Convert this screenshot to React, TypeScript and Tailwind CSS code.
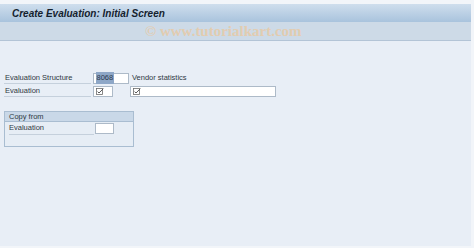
import React from 'react';

const font = { fontFamily: '"Liberation Sans", Arial, sans-serif' };

function CheckGlyph() {
  return (
    <svg width="8" height="7" viewBox="0 0 8 7" className="block">
      <rect x="0.5" y="0.5" width="6" height="6" fill="none" stroke="#6b6b6b" strokeWidth="0.8" />
      <path d="M1.6 3.6 L3 5 L7.4 0.6" fill="none" stroke="#4a4a4a" strokeWidth="0.9" />
    </svg>
  );
}

function Field({ width, children }: { width: string; children?: React.ReactNode }) {
  return (
    <div className={`${width} flex h-[11px] items-center border border-[#adbac8] bg-white px-[2px]`}>
      {children}
    </div>
  );
}

export default function App() {
  return (
    <div className="flex h-[248px] w-[474px] flex-col overflow-hidden bg-[#f2f5f9] text-[#2e3842]" style={font}>
      {/* title bar */}
      <div className="mt-[4px] mr-[3px] flex h-[18px] shrink-0 items-center bg-gradient-to-b from-[#cfdeed] to-[#a9c3dd] pl-[12px]">
        <span className="text-[10px] font-bold italic text-[#15222e]">Create Evaluation: Initial Screen</span>
      </div>
      {/* toolbar */}
      <div className="mr-[3px] flex h-[19px] shrink-0 items-center border-b border-[#b3c4d6] bg-[#cddae7] pl-[145px]">
        <span
          className="text-[15px] font-bold text-[#ecc79a] opacity-70"
          style={{ fontFamily: '"Liberation Serif", "Times New Roman", serif' }}
        >
          © www.tutorialkart.com
        </span>
      </div>
      {/* body */}
      <div className="mr-[3px] mb-[2px] flex flex-1 flex-col bg-[#e8eef6] pl-[4px] pt-[31px]">
        <div className="flex flex-col text-[7.5px]">
          <div className="flex h-[12px] items-center">
            <div className="flex h-full w-[87px] items-center border-b border-[#c5d0dc] pl-[1px]">Evaluation Structure</div>
            <div className="ml-[2px]">
              <Field width="w-[36px]">
                <span className="bg-[#8ea7c7] px-[0.5px] text-[#2d3b4d]">8068</span>
              </Field>
            </div>
            <span className="ml-[3px]">Vendor statistics</span>
          </div>
          <div className="mt-[1px] flex h-[12px] items-center">
            <div className="flex h-full w-[87px] items-center border-b border-[#c5d0dc] pl-[1px]">Evaluation</div>
            <div className="ml-[2px]">
              <Field width="w-[20px]">
                <CheckGlyph />
              </Field>
            </div>
            <div className="ml-[17px]">
              <Field width="w-[146px]">
                <CheckGlyph />
              </Field>
            </div>
          </div>
        </div>
        {/* group box */}
        <div className="mt-[14px] flex w-[130px] flex-col border border-[#a9bdd1] bg-[#e6edf5] text-[7.5px]">
          <div className="flex h-[10px] items-center border-b border-[#a9bdd1] bg-[#c9d8e8] pl-[4px]">Copy from</div>
          <div className="flex h-[13px] items-center pl-[4px]">
            <div className="flex h-full w-[85px] items-center border-b border-[#c5d0dc]">Evaluation</div>
            <div className="ml-[1px] h-[11px] w-[19px] border border-[#adbac8] bg-white" />
          </div>
          <div className="h-[11px]" />
        </div>
      </div>
    </div>
  );
}
